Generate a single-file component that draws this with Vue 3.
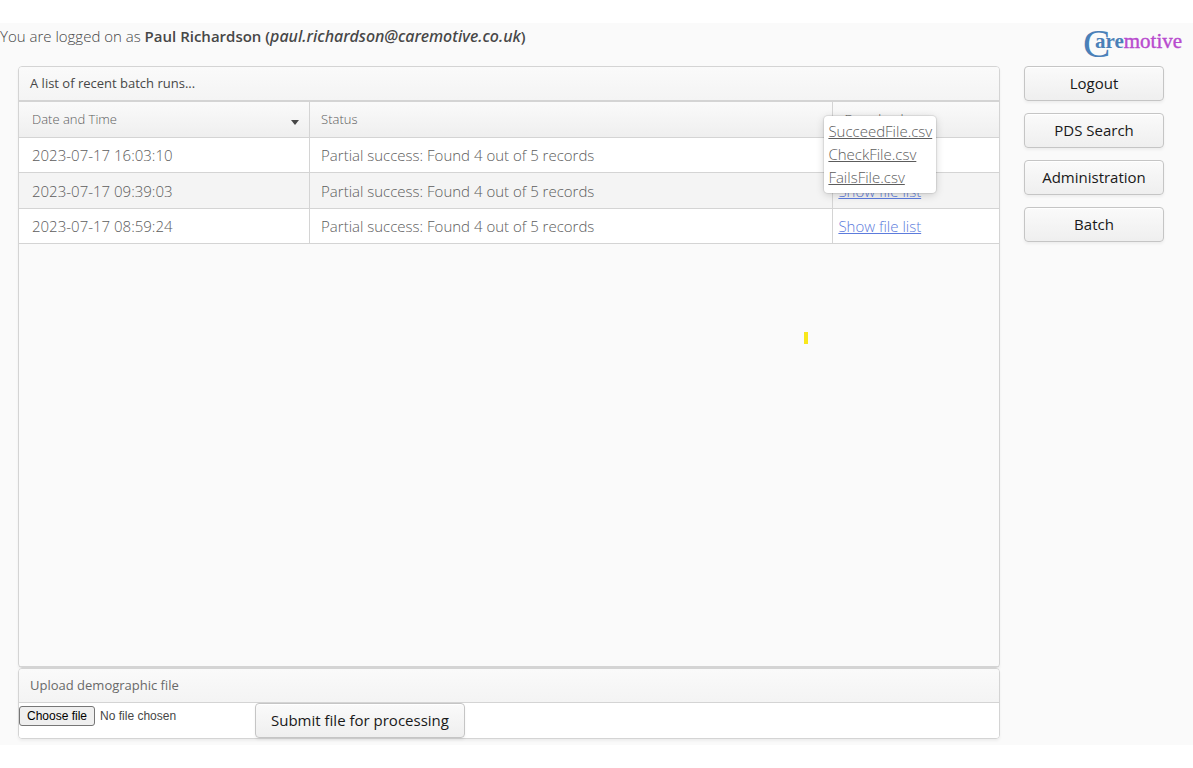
<script setup>
import { ref, computed } from 'vue'

const user = { name: 'Paul Richardson', email: 'paul.richardson@caremotive.co.uk' }

const menu = ['Logout', 'PDS Search', 'Administration', 'Batch']

const files = ['SucceedFile.csv', 'CheckFile.csv', 'FailsFile.csv']

const runs = ref([
  { date: '2023-07-17 16:03:10', status: 'Partial success: Found 4 out of 5 records' },
  { date: '2023-07-17 09:39:03', status: 'Partial success: Found 4 out of 5 records' },
  { date: '2023-07-17 08:59:24', status: 'Partial success: Found 4 out of 5 records' }
])

const descending = ref(true)
const openRun = ref('2023-07-17 16:03:10')
const fileName = ref('')

const sortedRuns = computed(() => {
  const list = [...runs.value].sort((a, b) => a.date.localeCompare(b.date))
  return descending.value ? list.reverse() : list
})

const toggleFiles = (run) => {
  openRun.value = openRun.value === run.date ? '' : run.date
}

const handleFile = (e) => {
  fileName.value = e.target.files[0]?.name || ''
}
</script>

<template>
  <div class="page">
    <div class="app">
      <header class="top-bar">
        <p class="logged-on">
          You are logged on as <b>{{ user.name }} (<i>{{ user.email }}</i>)</b>
        </p>
        <svg class="logo" viewBox="0 0 104 43" role="img" aria-label="Caremotive">
          <text class="logo-c" x="2" y="34">C</text>
          <text class="logo-text" x="14" y="25">
            <tspan class="logo-are">are</tspan><tspan class="logo-motive">motive</tspan>
          </text>
        </svg>
      </header>

      <div class="content">
        <main class="main">
          <section class="panel runs-panel">
            <h2 class="caption">A list of recent batch runs...</h2>
            <div class="grid">
              <table>
                <thead>
                  <tr>
                    <th class="col-date">
                      <button class="sort-btn" @click="descending = !descending">
                        Date and Time
                        <svg class="sort-icon" :class="{ up: !descending }" viewBox="0 0 8 5">
                          <path d="M0 0h8L4 5z" fill="#474747" />
                        </svg>
                      </button>
                    </th>
                    <th class="col-status">Status</th>
                    <th class="col-download"><span class="download-title">Download</span></th>
                  </tr>
                </thead>
                <tbody>
                  <tr v-for="run in sortedRuns" :key="run.date">
                    <td>{{ run.date }}</td>
                    <td>{{ run.status }}</td>
                    <td class="download">
                      <a href="#" class="show-link" @click.prevent="toggleFiles(run)">Show file list</a>
                      <div v-if="openRun === run.date" class="popup">
                        <a v-for="file in files" :key="file" href="#" @click.prevent>{{ file }}</a>
                      </div>
                    </td>
                  </tr>
                </tbody>
              </table>
              <span class="marker"></span>
            </div>
          </section>

          <section class="panel upload-panel">
            <h2 class="caption upload-caption">Upload demographic file</h2>
            <form class="upload" @submit.prevent>
              <div class="file-field">
                <input id="upload" type="file" class="file-input" @change="handleFile">
                <label for="upload" class="file-btn">Choose file</label>
                <span class="file-name">{{ fileName || 'No file chosen' }}</span>
              </div>
              <button type="submit" class="btn">Submit file for processing</button>
            </form>
          </section>
        </main>

        <nav class="menu">
          <button v-for="item in menu" :key="item" class="btn">{{ item }}</button>
        </nav>
      </div>
    </div>
  </div>
</template>

<style>
body {
  background: #fff;
}
</style>

<style scoped>
.page {
  box-sizing: border-box;
  min-height: 100vh;
  padding: 23px 0;
  display: flex;
  font-family: "Open Sans", sans-serif;
  font-size: 15px;
  font-weight: 300;
  line-height: 24px;
  color: #474747;
}

.app {
  flex: 1;
  min-width: 0;
  display: flex;
  flex-direction: column;
  background: #fafafa;
}

.top-bar {
  display: flex;
  justify-content: space-between;
  height: 43px;
  padding-right: 8px;
}

.logged-on {
  margin: 0;
  padding-top: 1px;
}

.logged-on b {
  font-weight: 600;
}

.logged-on i {
  font-family: "Noto Sans", "Open Sans", sans-serif;
  font-size: 16px;
  font-weight: 500;
}

.logo {
  width: 104px;
  height: 43px;
  overflow: visible;
  font-family: "Liberation Serif", serif;
}

.logo-c {
  font-size: 41px;
  fill: #4a80b8;
}

.logo-text {
  font-size: 21px;
}

.logo-are {
  font-weight: bold;
  fill: #4a80b8;
}

.logo-motive {
  fill: #b84bce;
  stroke: #b84bce;
  stroke-width: 0.4;
}

.content {
  flex: 1;
  display: flex;
  gap: 24px;
  padding: 0 29px 6px 18px;
}

.main {
  flex: 1;
  min-width: 0;
  display: flex;
  flex-direction: column;
}

.panel {
  border: 1px solid #d4d4d4;
  border-radius: 4px;
  box-shadow: 0 2px 3px rgba(0, 0, 0, 0.05);
}

.runs-panel {
  flex: 1;
  display: flex;
  flex-direction: column;
}

.caption {
  box-sizing: border-box;
  height: 34px;
  margin: 0;
  padding: 0 11px;
  border-bottom: 1px solid #d4d4d4;
  border-radius: 3px 3px 0 0;
  background: linear-gradient(to bottom, #fafafa 2%, #f4f4f4 98%);
  font-size: 13px;
  font-weight: 400;
  line-height: 32px;
}

.upload-caption {
  color: #696969;
}

.grid {
  position: relative;
  flex: 1;
  border-top: 1px solid #d4d4d4;
  border-bottom: 1px solid #d4d4d4;
}

table {
  width: 100%;
  table-layout: fixed;
  border-collapse: separate;
  border-spacing: 0;
}

.col-date {
  width: 29.6%;
}

.col-status {
  width: 53.4%;
}

th,
td {
  box-sizing: border-box;
  padding: 0 11px;
  border-bottom: 1px solid #d4d4d4;
  border-left: 1px solid #d4d4d4;
  text-align: left;
  white-space: nowrap;
  color: #5c5c5c;
}

th:first-child,
td:first-child {
  padding-left: 13px;
  border-left: none;
}

th {
  height: 36px;
  padding-bottom: 2px;
  background: linear-gradient(to bottom, #fafafa 2%, #efefef 98%);
  font-size: 13px;
  font-weight: 300;
}

td {
  height: 35px;
  background: #fff;
  font-size: 15px;
}

tbody tr:nth-child(even) td {
  height: 36px;
  background: #f4f4f4;
}

.sort-btn {
  width: 100%;
  display: flex;
  justify-content: space-between;
  align-items: center;
  padding: 0;
  border: none;
  background: none;
  font: inherit;
  color: inherit;
  cursor: pointer;
}

.sort-icon {
  width: 8px;
  height: 5px;
  margin: 8px -1px 0 0;
}

.sort-icon.up {
  transform: rotate(180deg);
}

.col-download,
.download {
  padding-left: 5px;
}

.download {
  position: relative;
}

.download-title {
  padding-left: 6px;
}

.show-link {
  color: #5c7bdc;
}

.popup {
  position: absolute;
  z-index: 10;
  top: -22px;
  left: -9px;
  display: flex;
  flex-direction: column;
  padding: 4px;
  border-radius: 4px;
  background: #fff;
  box-shadow: 0 2px 8px rgba(0, 0, 0, 0.16), 0 0 1px 1px rgba(0, 0, 0, 0.09);
  line-height: 23px;
}

.popup a {
  color: #5c5c5c;
}

.marker {
  position: absolute;
  top: 230px;
  left: 80.1%;
  width: 4px;
  height: 12px;
  background: #f8e71c;
}

.upload {
  display: flex;
  align-items: flex-start;
  height: 35px;
  background: #fff;
  border-radius: 0 0 3px 3px;
}

.file-field {
  position: relative;
  width: 236px;
  padding-top: 3px;
  display: flex;
  align-items: center;
  gap: 5px;
  font-family: "Liberation Sans", sans-serif;
  font-size: 12px;
  font-weight: 400;
  line-height: 18px;
}

.file-input {
  position: absolute;
  width: 1px;
  height: 1px;
  opacity: 0;
}

.file-btn {
  padding: 0 7px;
  border: 1px solid #767676;
  border-radius: 3px;
  background: #efefef;
  color: #000;
  cursor: pointer;
}

.menu {
  width: 140px;
  display: flex;
  flex-direction: column;
  gap: 12px;
}

.btn {
  box-sizing: border-box;
  height: 35px;
  padding: 0 15px 2px;
  border: 1px solid #c5c5c5;
  border-radius: 4px;
  background: linear-gradient(to bottom, #fafafa 2%, #efefef 98%);
  box-shadow: inset 0 1px 0 #fff, 0 2px 3px rgba(0, 0, 0, 0.05);
  font-family: inherit;
  font-size: 15px;
  font-weight: 400;
  color: #191919;
  white-space: nowrap;
  cursor: pointer;
}

.btn:hover {
  background: #f4f4f4;
}
</style>
